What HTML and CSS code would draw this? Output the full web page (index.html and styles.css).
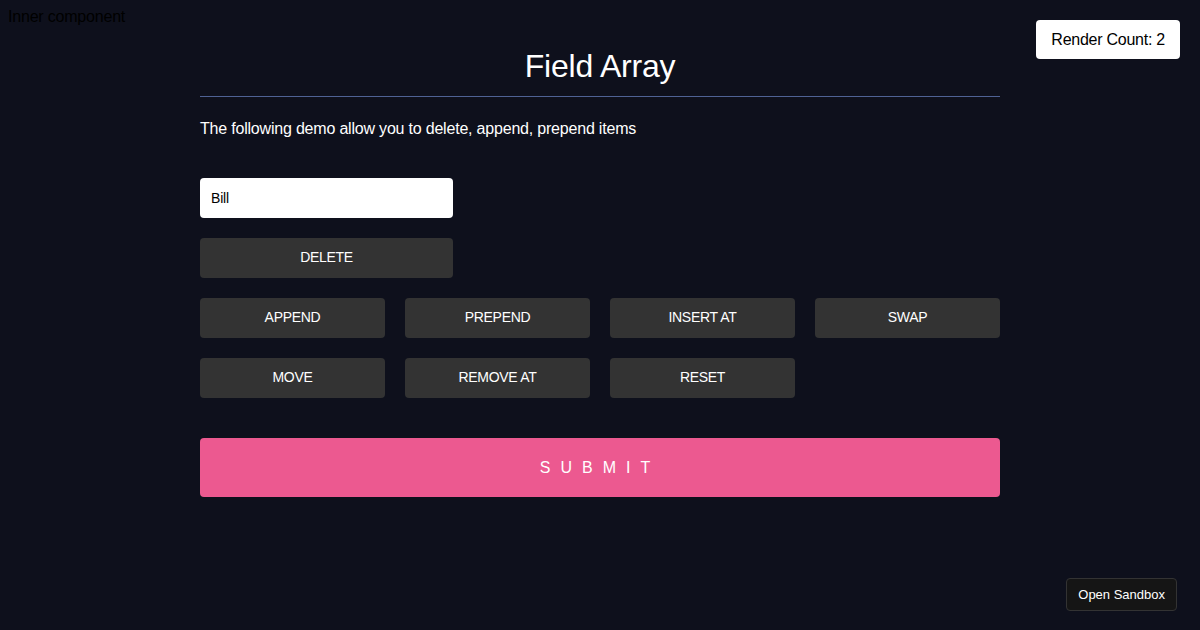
FILE: index.html
```html
<!DOCTYPE html>
<html lang="en">

<head>
    <meta charset="UTF-8">
    <title>Field Array</title>
    <meta name="viewport" content="width=device-width, initial-scale=1.0">
    <link rel="stylesheet" href="styles.css">
</head>

<body>
    <div class="inner">Inner component</div>
    <div class="render-count">Render Count: 2</div>

    <form class="form">
        <h1>Field Array</h1>
        <p class="intro">The following demo allow you to delete, append, prepend items</p>

        <ul class="items">
            <li class="item">
                <input type="text" name="test.0.name" value="Bill">
                <button type="button" class="btn">Delete</button>
            </li>
        </ul>

        <section class="actions">
            <button type="button" class="btn">Append</button>
            <button type="button" class="btn">Prepend</button>
            <button type="button" class="btn">Insert at</button>
            <button type="button" class="btn">Swap</button>
            <button type="button" class="btn">Move</button>
            <button type="button" class="btn">Remove at</button>
            <button type="button" class="btn">Reset</button>
        </section>

        <button type="submit" class="submit">Submit</button>
    </form>

    <button class="sandbox">Open Sandbox</button>
</body>

</html>
```

FILE: styles.css
```css
body {
    margin: 0;
    padding: 8px 0 0;
    background: #0e101c;
    font-family: 'Liberation Sans', Arial, sans-serif;
    color: #fff;
    min-height: 622px;
}

.inner {
    color: #000;
    font-size: 16px;
    line-height: 18px;
    letter-spacing: -0.2px;
    padding-left: 8px;
}

.render-count {
    position: absolute;
    top: 20px;
    right: 20px;
    background: #fff;
    color: #000;
    font-size: 16px;
    line-height: 39px;
    letter-spacing: -0.25px;
    padding: 0 15px;
    border-radius: 4px;
}

.form {
    max-width: 800px;
    margin: 0 auto;
}

h1 {
    font-size: 32px;
    font-weight: 400;
    line-height: 37px;
    letter-spacing: -0.2px;
    text-align: center;
    margin: 22px 0 0;
    padding-bottom: 11px;
    border-bottom: 1px solid rgb(79, 98, 148);
}

.intro {
    font-size: 16px;
    line-height: 18px;
    letter-spacing: -0.2px;
    margin: 23px 0 0;
}

.items {
    list-style: none;
    margin: 40px 0 0;
    padding: 0;
}

.item {
    display: flex;
    flex-direction: column;
    gap: 20px;
    width: 253px;
}

.item input {
    box-sizing: border-box;
    width: 100%;
    height: 40px;
    border: none;
    border-radius: 4px;
    padding: 0 11px 1px;
    font-family: inherit;
    font-size: 14px;
    letter-spacing: -0.2px;
    color: #000;
    background: #fff;
}

.btn {
    height: 40px;
    border: none;
    border-radius: 4px;
    padding: 0 0 2px;
    background: #333;
    color: #fff;
    font-family: inherit;
    font-size: 14px;
    letter-spacing: -0.3px;
    text-transform: uppercase;
    cursor: pointer;
}

.actions {
    display: grid;
    grid-template-columns: repeat(4, 1fr);
    gap: 20px;
    margin-top: 20px;
}

.submit {
    display: block;
    width: 100%;
    height: 59px;
    margin-top: 40px;
    border: none;
    border-radius: 4px;
    background: #ec5990;
    color: #fff;
    font-family: inherit;
    font-size: 16px;
    letter-spacing: 10px;
    text-transform: uppercase;
    cursor: pointer;
}

.sandbox {
    position: absolute;
    right: 23px;
    bottom: 19px;
    height: 33px;
    padding: 0 11px;
    background: #151515;
    border: 1px solid #333;
    border-radius: 4px;
    color: #fff;
    font-family: inherit;
    font-size: 13px;
}
```
